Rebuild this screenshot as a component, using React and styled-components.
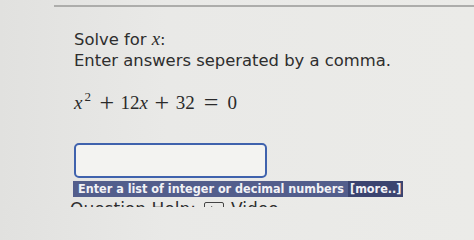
import React from "react";
import styled, { createGlobalStyle } from "styled-components";

const Global = createGlobalStyle`
  html, body { margin: 0; padding: 0; }
  body {
    width: 474px; height: 207px; overflow: hidden;
    background: linear-gradient(90deg, #e1e1df 0%, #e9e9e7 35%, #ebebe8 100%);
    font-family: "DejaVu Sans", Verdana, sans-serif;
  }
`;

const Page = styled.div`
  width: 474px;
  height: 207px;
  overflow: hidden;
  padding-top: 5px;
  box-sizing: border-box;
`;

const TopRule = styled.div`
  margin-left: 54px;
  height: 1.5px;
  background: #adadab;
`;

const Content = styled.div`
  padding: 21px 0 0 74px;
  color: #2e2e2e;
`;

const Line = styled.div`
  font-size: 16.4px;
  line-height: 21px;
  white-space: nowrap;
`;

const MathVar = styled.span`
  font-family: "Liberation Serif", "DejaVu Serif", serif;
  font-style: italic;
  font-size: 1.15em;
`;

const Equation = styled.div`
  margin-top: 20px;
  height: 23px;
  font-family: "Liberation Serif", "DejaVu Serif", serif;
  font-size: 19px;
  line-height: 23px;
  color: #2a2a2a;
  white-space: nowrap;
`;

const EqVar = styled.span`
  font-style: italic;
`;

const Op = styled.span`
  font-size: 26px;
  font-weight: 300;
  line-height: 0;
  vertical-align: -2px;
  margin: 0 ${(p) => (p.$wide ? 9 : 6.5)}px;
`;

const Sup = styled.sup`
  font-size: 13px;
  vertical-align: 8px;
  line-height: 0;
  margin-left: 2px;
  margin-right: 2px;
`;

const Answer = styled.div`
  margin-top: 29px;
  width: 189px;
  height: 31px;
  border: 2px solid #3f62ad;
  border-radius: 5px;
  background: #f3f3f1;
`;

const Hint = styled.div`
  margin-top: 3px;
  margin-left: -1px;
  width: 328px;
  height: 16px;
  background: #535e8c;
  display: flex;
  align-items: center;
  padding-left: 5px;
  box-sizing: border-box;
  font-family: "DejaVu Sans Condensed", "DejaVu Sans", sans-serif;
  font-weight: bold;
  font-size: 12.5px;
  color: #f2f2f6;
  white-space: nowrap;
`;

const More = styled.span`
  background: #3b4470;
  margin-left: 4px;
  padding: 0 2px;
  line-height: 16px;
`;

const Help = styled.div`
  margin-top: 2px;
  margin-left: -4px;
  display: flex;
  align-items: center;
  gap: 8px;
  font-size: 17px;
  line-height: 21px;
  color: #2e2e2e;
  white-space: nowrap;
`;

const VideoIcon = styled.span`
  display: inline-flex;
  align-items: center;
  justify-content: center;
  box-sizing: border-box;
  width: 20px;
  height: 14px;
  border: 1.5px solid #444;
  border-radius: 2px;
  &::after {
    content: "";
    border-left: 5px solid #444;
    border-top: 3.5px solid transparent;
    border-bottom: 3.5px solid transparent;
  }
`;

const VideoLink = styled.span`
  display: inline-flex;
  align-items: center;
  gap: 7px;
`;

export default function App() {
  return (
    <>
      <Global />
      <Page>
        <TopRule />
        <Content>
          <Line>
            Solve for <MathVar>x</MathVar>:
          </Line>
          <Line>Enter answers seperated by a comma.</Line>
          <Equation>
            <EqVar>x</EqVar>
            <Sup>2</Sup>
            <Op>+</Op>
            <span>12</span>
            <EqVar>x</EqVar>
            <Op>+</Op>
            <span>32</span>
            <Op $wide>=</Op>
            <span>0</span>
          </Equation>
          <Answer />
          <Hint>
            Enter a list of integer or decimal numbers<More>[more..]</More>
          </Hint>
          <Help>
            <span>Question Help:</span>
            <VideoLink>
              <VideoIcon />
              Video
            </VideoLink>
          </Help>
        </Content>
      </Page>
    </>
  );
}
